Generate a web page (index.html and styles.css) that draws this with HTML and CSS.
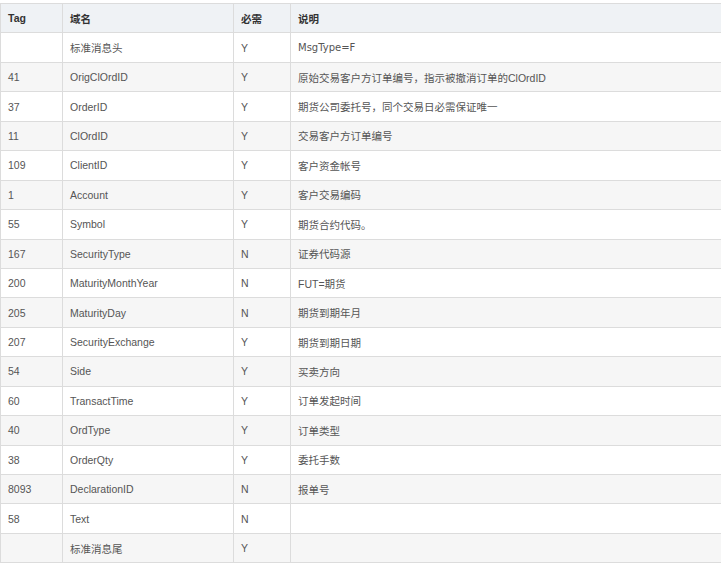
FILE: index.html
```html
<!DOCTYPE html>
<html lang="zh">
<head>
<meta charset="utf-8">
<link rel="stylesheet" href="styles.css">
</head>
<body>
<div class="wrap">
<table class="fields">
<colgroup><col class="c-tag"><col class="c-name"><col class="c-req"><col class="c-desc"></colgroup>
<thead>
<tr><th>Tag</th><th>域名</th><th>必需</th><th>说明</th></tr>
</thead>
<tbody>
<tr><td></td><td>标准消息头</td><td>Y</td><td class="wide">MsgType=F</td></tr>
<tr><td>41</td><td>OrigClOrdID</td><td>Y</td><td>原始交易客户方订单编号，指示被撤消订单的ClOrdID</td></tr>
<tr><td>37</td><td>OrderID</td><td>Y</td><td>期货公司委托号，同个交易日必需保证唯一</td></tr>
<tr><td>11</td><td>ClOrdID</td><td>Y</td><td>交易客户方订单编号</td></tr>
<tr><td>109</td><td>ClientID</td><td>Y</td><td>客户资金帐号</td></tr>
<tr><td>1</td><td>Account</td><td>Y</td><td>客户交易编码</td></tr>
<tr><td>55</td><td>Symbol</td><td>Y</td><td>期货合约代码。</td></tr>
<tr><td>167</td><td>SecurityType</td><td>N</td><td>证券代码源</td></tr>
<tr><td>200</td><td>MaturityMonthYear</td><td>N</td><td>FUT=期货</td></tr>
<tr><td>205</td><td>MaturityDay</td><td>N</td><td>期货到期年月</td></tr>
<tr><td>207</td><td>SecurityExchange</td><td>Y</td><td>期货到期日期</td></tr>
<tr><td>54</td><td>Side</td><td>Y</td><td>买卖方向</td></tr>
<tr><td>60</td><td>TransactTime</td><td>Y</td><td>订单发起时间</td></tr>
<tr><td>40</td><td>OrdType</td><td>Y</td><td>订单类型</td></tr>
<tr><td>38</td><td>OrderQty</td><td>Y</td><td>委托手数</td></tr>
<tr><td>8093</td><td>DeclarationID</td><td>N</td><td>报单号</td></tr>
<tr><td>58</td><td>Text</td><td>N</td><td></td></tr>
<tr><td></td><td>标准消息尾</td><td>Y</td><td></td></tr>
</tbody>
</table>
</div>
</body>
</html>
```
FILE: styles.css
```css
html, body {
  margin: 0;
  padding: 0;
  background: #fff;
  overflow: hidden;
}
.wrap {
  padding-top: 3px;
}
.fields {
  border-collapse: collapse;
  table-layout: fixed;
  width: 721px;
  font-family: "Liberation Sans", Arial, "Noto Sans CJK SC", sans-serif;
  font-size: 10.5px;
  color: #555;
}
.c-tag { width: 62px; }
.c-name { width: 171px; }
.c-req { width: 57px; }
.c-desc { width: 431px; }
.fields th, .fields td {
  border: 1px solid #dcdcdc;
  padding: 0 7px;
  height: 28.45px;
  text-align: left;
  vertical-align: middle;
  white-space: nowrap;
}
.fields th:last-child, .fields td:last-child {
  border-right: 0;
}
.fields th {
  background: #eff2f5;
  color: #333;
  font-weight: bold;
}
.fields tbody tr:nth-child(even) td {
  background: #f6f6f6;
}
.wide {
  font-family: "DejaVu Sans", Verdana, sans-serif;
  font-size: 10px;
}
```
